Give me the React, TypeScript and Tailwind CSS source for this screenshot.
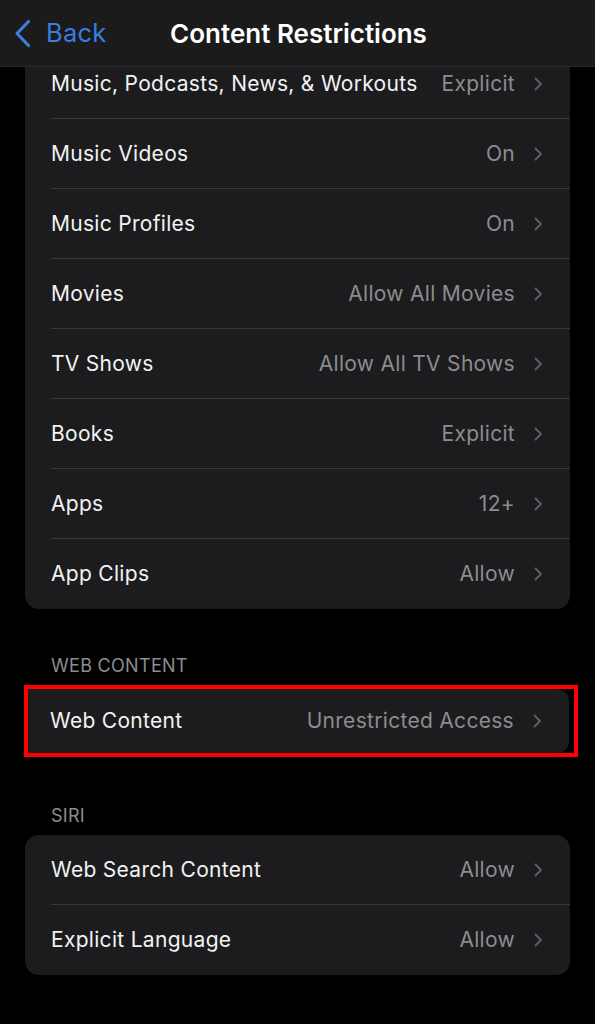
import React from "react";

type Row = { label: string; value: string };

const MAIN_ROWS: Row[] = [
  { label: "Music, Podcasts, News, & Workouts", value: "Explicit" },
  { label: "Music Videos", value: "On" },
  { label: "Music Profiles", value: "On" },
  { label: "Movies", value: "Allow All Movies" },
  { label: "TV Shows", value: "Allow All TV Shows" },
  { label: "Books", value: "Explicit" },
  { label: "Apps", value: "12+" },
  { label: "App Clips", value: "Allow" },
];

const SIRI_ROWS: Row[] = [
  { label: "Web Search Content", value: "Allow" },
  { label: "Explicit Language", value: "Allow" },
];

function Chevron() {
  return (
    <svg className="w-[10px] h-[16px] shrink-0" viewBox="0 0 10 16" fill="none">
      <path d="M2.5 2.5l5.5 5.5-5.5 5.5" stroke="#5c5c60" strokeWidth={2} strokeLinecap="round" strokeLinejoin="round" />
    </svg>
  );
}

function SettingRow({ row, last, height }: { row: Row; last: boolean; height: string }) {
  return (
    <div className={`pl-[26px] ${height}`}>
      <div
        className={`flex h-full items-center justify-between pr-[27px] ${
          last ? "" : "border-b border-[#38383a]"
        }`}
      >
        <span className="text-[21px] tracking-[0.3px] text-[#f2f2f2] whitespace-nowrap">{row.label}</span>
        <div className="flex items-center gap-[18px]">
          <span className="text-[21px] tracking-[0.3px] text-[#8c8c90] whitespace-nowrap">{row.value}</span>
          <Chevron />
        </div>
      </div>
    </div>
  );
}

function SectionHeader({ children, top }: { children: React.ReactNode; top: string }) {
  return (
    <div className={`${top} mb-[10px] h-[20px] pl-[26px] flex items-center text-[18px] tracking-[0.3px] text-[#8c8c90] uppercase`}>
      {children}
    </div>
  );
}

export default function App() {
  return (
    <div
      className="relative min-h-screen bg-black overflow-hidden"
      style={{ fontFamily: "Inter, 'Noto Sans', sans-serif" }}
    >
      {/* Nav bar over the scrolled list */}
      <div className="absolute top-0 inset-x-0 z-10 h-[67px] bg-[#1b1b1c] border-b border-[#2a2a2c] flex items-center">
        <div className="flex items-center pl-[14px] gap-[15px]">
          <svg className="w-[17px] h-[29px]" viewBox="0 0 17 29" fill="none">
            <path d="M14.5 2.5L3 14.5l11.5 12" stroke="#3b7de0" strokeWidth={3.2} strokeLinecap="round" strokeLinejoin="round" />
          </svg>
          <span className="text-[25.5px] tracking-[0.2px] text-[#3b7de0]">Back</span>
        </div>
        <h1 className="absolute left-0 right-0 text-center text-[26px] font-semibold text-white pointer-events-none pl-[2px]">
          Content Restrictions
        </h1>
      </div>

      <div className="pt-[49px] px-[25px] pb-10">
        {/* Store content */}
        <div className="bg-[#1c1c1e] rounded-b-[14px]">
          {MAIN_ROWS.map((r, i) => (
            <SettingRow key={r.label} row={r} last={i === MAIN_ROWS.length - 1} height="h-[70px]" />
          ))}
        </div>

        <SectionHeader top="mt-[46px]">Web Content</SectionHeader>
        <div className="ml-[-1px] mr-[-8px] border-[4px] border-[#ff0000] pr-[5px]">
          <div className="bg-[#1c1c1e] rounded-r-[12px]">
            <div className="-ml-[4px]">
              <SettingRow row={{ label: "Web Content", value: "Unrestricted Access" }} last height="h-[64px]" />
            </div>
          </div>
        </div>

        <SectionHeader top="mt-[48px]">Siri</SectionHeader>
        <div className="bg-[#1c1c1e] rounded-[14px]">
          {SIRI_ROWS.map((r, i) => (
            <SettingRow key={r.label} row={r} last={i === SIRI_ROWS.length - 1} height="h-[70px]" />
          ))}
        </div>
      </div>
    </div>
  );
}
